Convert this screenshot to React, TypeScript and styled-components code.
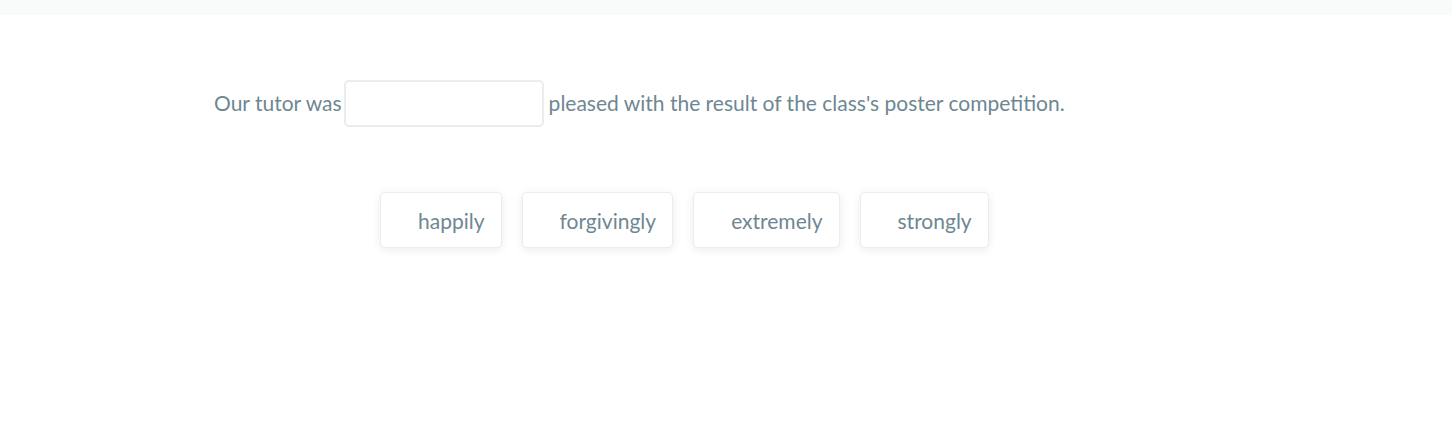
import React from "react";
import styled, { createGlobalStyle } from "styled-components";

const Global = createGlobalStyle`
  html, body { margin: 0; padding: 0; background: #ffffff; }
  body { font-family: Lato, "Open Sans", sans-serif; }
`;

const Page = styled.div`
  display: flex;
  flex-direction: column;
  width: 1452px;
  min-height: 438px;
`;

const TopBar = styled.div`
  height: 15px;
  background: #f8fbfa;
`;

const Sentence = styled.div`
  display: flex;
  align-items: center;
  margin-top: 65px;
  padding-left: 214px;
  font-size: 21px;
  color: #6e8792;
  line-height: 24px;
`;

const Text = styled.span`
  position: relative;
  top: -1px;
`;

const Blank = styled.div`
  width: 196px;
  height: 43px;
  margin: 0 5px 0 2px;
  border: 2px solid #ececec;
  border-radius: 5px;
  background: #fff;
`;

const Words = styled.div`
  display: flex;
  gap: 20px;
  margin-top: 65px;
  padding-left: 380px;
`;

const Word = styled.div`
  box-sizing: border-box;
  height: 56px;
  display: flex;
  align-items: center;
  padding: 0 16px 0 37px;
  border: 1px solid #ececec;
  border-radius: 5px;
  background: #fff;
  box-shadow: 0 2px 10px rgba(0, 0, 0, 0.08);
  font-size: 21px;
  color: #6e8792;
`;

const words = ["happily", "forgivingly", "extremely", "strongly"];

export default function App() {
  return (
    <Page>
      <Global />
      <TopBar />
      <Sentence>
        <Text>Our tutor was</Text>
        <Blank />
        <Text>pleased with the result of the class's poster competition.</Text>
      </Sentence>
      <Words>
        {words.map((w) => (
          <Word key={w}>{w}</Word>
        ))}
      </Words>
    </Page>
  );
}
